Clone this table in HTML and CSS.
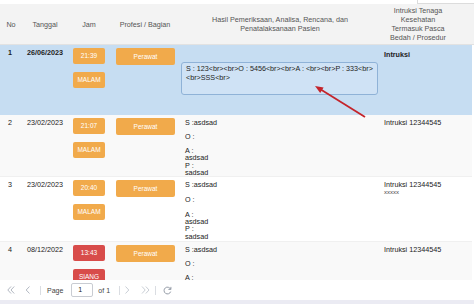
FILE: index.html
```html
<!DOCTYPE html>
<html>
<head>
<meta charset="utf-8">
<link rel="stylesheet" href="styles.css">
</head>
<body>
<div class="topbar"><div class="search"></div></div>
<div class="grid">
  <div class="head">
    <div class="hc">No</div>
    <div class="hc">Tanggal</div>
    <div class="hc">Jam</div>
    <div class="hc">Profesi / Bagian</div>
    <div class="hc">Hasil Pemeriksaan, Analisa, Rencana, dan<br>Penatalaksanaan Pasien</div>
    <div class="hc">Intruksi Tenaga<br>Kesehatan<br>Termasuk Pasca<br>Bedah / Prosedur</div>
  </div>
  <div class="body">
    <div class="row r1 sel">
      <div class="c no">1</div>
      <div class="c tgl">26/06/2023</div>
      <div class="c jam"><div class="badge">21:39</div><div class="badge">MALAM</div></div>
      <div class="c prof"><div class="badge wide">Perawat</div></div>
      <div class="c hasil"><div class="ta"><div class="ln">S : 123&lt;br&gt;&lt;br&gt;O : 5456&lt;br&gt;&lt;br&gt;A : &lt;br&gt;&lt;br&gt;P : 333&lt;br&gt;</div><div class="ln">&lt;br&gt;SSS&lt;br&gt;</div></div></div>
      <div class="c ins">Intruksi</div>
    </div>
    <div class="row r2 alt">
      <div class="c no">2</div>
      <div class="c tgl">23/02/2023</div>
      <div class="c jam"><div class="badge">21:07</div><div class="badge">MALAM</div></div>
      <div class="c prof"><div class="badge wide">Perawat</div></div>
      <div class="c hasil soap">S :asdsad<br>&nbsp;<br>O :<br>&nbsp;<br>A :<br>asdsad<br>P :<br>sadsad</div>
      <div class="c ins">Intruksi 12344545</div>
    </div>
    <div class="row r3">
      <div class="c no">3</div>
      <div class="c tgl">23/02/2023</div>
      <div class="c jam"><div class="badge">20:40</div><div class="badge">MALAM</div></div>
      <div class="c prof"><div class="badge wide">Perawat</div></div>
      <div class="c hasil soap loose">S :asdsad<br>&nbsp;<br>O :<br>&nbsp;<br>A :<br>asdsad<br>P :<br>sadsad</div>
      <div class="c ins">Intruksi 12344545<br><span class="small">xxxxx</span></div>
    </div>
    <div class="row r4 alt">
      <div class="c no">4</div>
      <div class="c tgl">08/12/2022</div>
      <div class="c jam"><div class="badge red">13:43</div><div class="badge red">SIANG</div></div>
      <div class="c prof"><div class="badge wide">Perawat</div></div>
      <div class="c hasil soap">S :asdsad<br>&nbsp;<br>O :<br>&nbsp;<br>A :</div>
      <div class="c ins">Intruksi 12344545</div>
    </div>
  </div>
  <div class="pager">
    <svg class="ic first" width="8" height="8" viewBox="0 0 8 8"><path d="M4 0.5 L0.8 4 L4 7.5 M7.2 0.5 L4 4 L7.2 7.5" fill="none" stroke="#a9b0bb" stroke-width="0.9"/></svg>
    <svg class="ic prev" width="6" height="8" viewBox="0 0 6 8"><path d="M4.5 0.5 L1.2 4 L4.5 7.5" fill="none" stroke="#a9b0bb" stroke-width="0.9"/></svg>
    <span class="sep s1"></span>
    <span class="lbl page">Page</span>
    <span class="inp">1</span>
    <span class="lbl of">of 1</span>
    <span class="sep s2"></span>
    <svg class="ic next" width="6" height="8" viewBox="0 0 6 8"><path d="M1.5 0.5 L4.8 4 L1.5 7.5" fill="none" stroke="#c3c8d0" stroke-width="0.9"/></svg>
    <svg class="ic last" width="9" height="8" viewBox="0 0 9 8"><path d="M1 0.5 L4.2 4 L1 7.5 M4.8 0.5 L8 4 L4.8 7.5" fill="none" stroke="#c3c8d0" stroke-width="0.9"/></svg>
    <span class="sep s3"></span>
    <svg class="ic ref" width="9" height="9" viewBox="0 0 9 9"><path d="M7.6 3.2 A3.4 3.4 0 1 0 7.7 5.6" fill="none" stroke="#8a929e" stroke-width="0.9"/><path d="M7.9 0.9 L7.9 3.4 L5.4 3.4" fill="none" stroke="#8a929e" stroke-width="0.9"/></svg>
  </div>
</div>
<div class="foot"></div>
<svg class="arrow" width="474" height="304" viewBox="0 0 474 304"><line x1="365" y1="117" x2="320" y2="89" stroke="#c4242b" stroke-width="1.8"/><polygon points="315,86 323.6,87.4 320.2,92.9" fill="#c4242b"/></svg>
</body>
</html>
```

FILE: styles.css
```css
* { box-sizing: border-box; }
html, body { margin: 0; padding: 0; }
body {
  width: 474px;
  height: 304px;
  overflow: hidden;
  position: relative;
  background: #fff;
  font-family: "Liberation Sans", Arial, sans-serif;
  font-size: 7.2px;
  color: #222;
}
.topbar {
  height: 4px;
  display: flex;
  justify-content: flex-end;
}
.search {
  width: 57px;
  height: 4px;
  border: 1px solid #dcdcdc;
  border-top: none;
  border-right: none;
  background: #fff;
}
.head {
  height: 41px;
  display: grid;
  grid-template-columns: 22px 46px 42px 70px 200px 76px;
  padding-right: 18px;
  background: #f3f3f3;
  border-bottom: 1px solid #e2e2e2;
  color: #555;
  align-items: center;
}
.hc {
  text-align: center;
  line-height: 9px;
}
.body {
  height: 235px;
  overflow: hidden;
}
.row {
  width: 472px;
  display: grid;
  grid-template-columns: 22px 46px 42px 70px 200px 92px;
  align-items: start;
  overflow: hidden;
  border-bottom: 1px solid #f0f0f0;
}
.r1 { height: 70px; }
.r2 { height: 62px; }
.r3 { height: 65px; }
.r4 { height: 60px; }
.sel { background: #c6ddf2; border-bottom-color: #c6ddf2; }
.alt { background: #f9f9f9; }
.c { line-height: 7px; }
.no { padding: 4px 0 0 8px; }
.tgl { padding: 4px 0 0 5px; }
.sel .no, .sel .tgl, .sel .ins { font-weight: bold; }
.jam { padding: 3px 0 0 5px; }
.prof { padding: 3px 5px 0 6px; }
.hasil { padding: 4px 0 0 5px; }
.ins { padding: 4px 0 0 4px; }
.sel .ins { padding-top: 6px; }
.soap { line-height: 7.1px; }
.loose { line-height: 7.4px; }
.small { font-size: 6px; color: #444; }
.badge {
  width: 32px;
  height: 16px;
  margin-bottom: 8px;
  border-radius: 2px;
  background: #f1aa4b;
  color: #fff;
  font-size: 6.5px;
  line-height: 16px;
  text-align: center;
}
.badge.wide { width: 59px; height: 17px; line-height: 17px; }
.badge.red { background: #d84c4a; }
.ta {
  margin: 13px 0 0 -4px;
  width: 197px;
  height: 33px;
  border: 1px solid #8fb2d7;
  border-radius: 3px;
  background: #cfe2f5;
  padding: 1px 0 0 4px;
  line-height: 9px;
  color: #222;
}
.ln { white-space: nowrap; }
.pager {
  height: 20px;
  display: flex;
  align-items: center;
  padding-left: 7px;
  color: #444;
  font-size: 7px;
}
.ic { display: block; }
.prev { margin-left: 10px; }
.sep { width: 1px; height: 9px; background: #dadde2; }
.s1 { margin-left: 9px; }
.page { margin-left: 6px; }
.inp {
  margin-left: 8px;
  width: 22px;
  height: 14px;
  border: 1px solid #c9ccd2;
  border-radius: 2px;
  background: #fff;
  padding-left: 6px;
  line-height: 12px;
  color: #222;
}
.of { margin-left: 5px; }
.s2 { margin-left: 9px; }
.next { margin-left: 4px; }
.last { margin-left: 11px; }
.s3 { margin-left: 5px; }
.ref { margin-left: 7px; }
.foot {
  height: 4px;
  background: #ebebf3;
}
.arrow {
  position: absolute;
  left: 0;
  top: 0;
  pointer-events: none;
}
```
